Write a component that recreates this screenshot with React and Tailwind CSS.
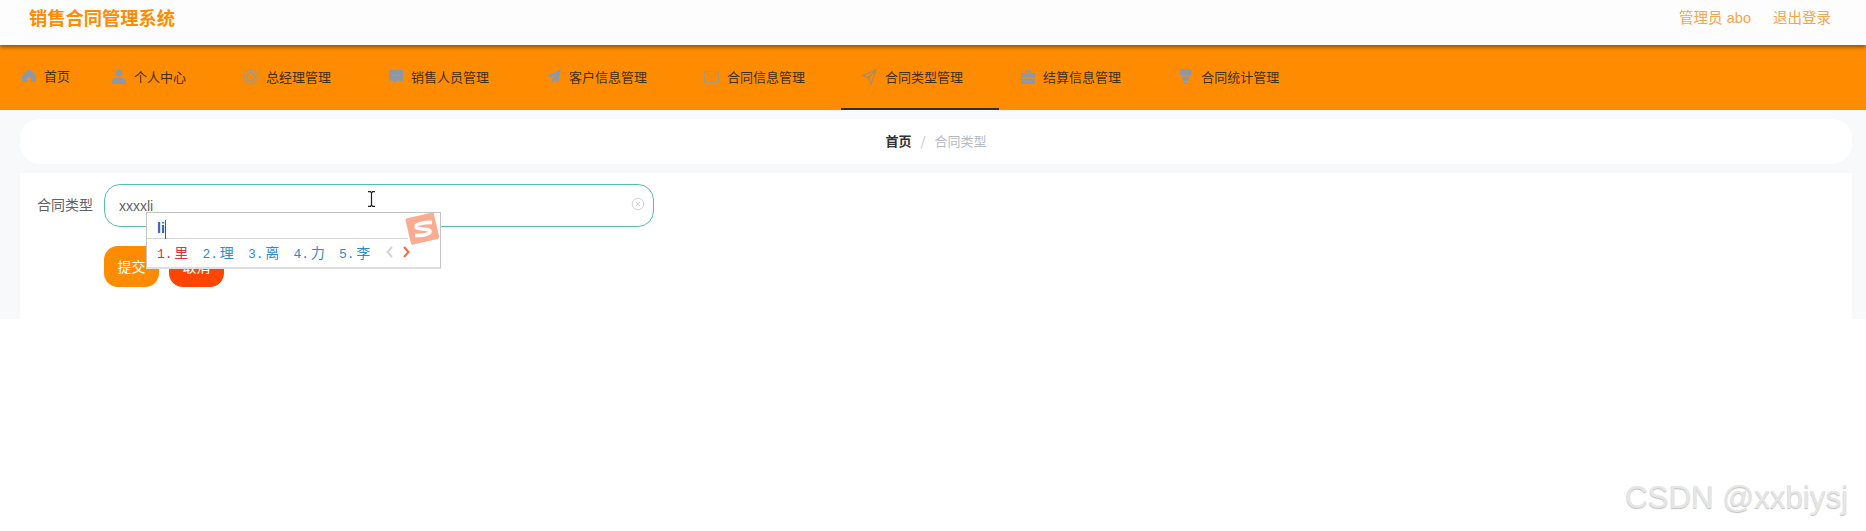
import { ChevronDown, CircleX } from 'lucide-react';

const CJK = '"Noto Sans CJK SC", "Liberation Sans", sans-serif';

function HomeIcon() {
  return (
    <svg width="14" height="13" viewBox="0 0 15 14" className="text-[#8d97a8]">
      <path d="M7.500 0 15 6.600V14H9.600V9.200H5.400V14H0V6.600Z" fill="currentColor" />
    </svg>
  );
}

function UserIcon() {
  return (
    <svg width="14" height="15" viewBox="0 0 15 16" className="text-[#8d97a8]">
      <circle cx="7.500" cy="4" r="3.800" fill="currentColor" />
      <path d="M0 16v-2.600C0 10.600 2.400 9 4.600 9h5.800c2.200 0 4.600 1.600 4.600 4.400V16Z" fill="currentColor" />
    </svg>
  );
}

function HelpIcon() {
  return (
    <svg width="16" height="16" viewBox="0 0 17 17" fill="none" stroke="#a39a82">
      <circle cx="8.500" cy="8.500" r="7.600" strokeWidth="1.300" />
      <circle cx="8.500" cy="8.500" r="4.200" strokeWidth="2" />
    </svg>
  );
}

function CommentIcon() {
  return (
    <svg width="14" height="14" viewBox="0 0 15 15">
      <path d="M0 0h15v11.500H8L5 15v-3.500H0Z" fill="#8d97a8" />
      <circle cx="4.300" cy="6" r=".8" fill="#ff8c00" />
      <circle cx="7.500" cy="6" r=".8" fill="#ff8c00" />
      <circle cx="10.700" cy="6" r=".8" fill="#ff8c00" />
    </svg>
  );
}

function PromotionIcon() {
  return (
    <svg width="14" height="15" viewBox="0 0 15 15">
      <path d="M15 0 0 6.500l3.800 2.300L11 4 5.500 10v5l3-3.500L12 13.500Z" fill="#8d97a8" />
    </svg>
  );
}

function MailIcon() {
  return (
    <svg width="15" height="12" viewBox="0 0 15 12" fill="none" stroke="#a8977a" strokeWidth="1">
      <path d="M.5.500h14v11H.5Z" />
      <path d="M.5.800 7.500 7l7-6.200" />
    </svg>
  );
}

function PositionIcon() {
  return (
    <svg width="15" height="16" viewBox="0 0 15 16" fill="none" stroke="#9c8e72" strokeWidth="1.100">
      <path d="M14 1 1 6.500l5.600 2L9 15Z" />
      <path d="M14 1 6.600 8.500" />
    </svg>
  );
}

function CaseIcon() {
  return (
    <svg width="14" height="14" viewBox="0 0 14 14">
      <path d="M4.500 3V1h5v2" fill="none" stroke="#8d97a8" strokeWidth="1.400" />
      <path d="M0 3h14v4.500H0ZM0 8.700h14V14H0Z" fill="#8d97a8" />
    </svg>
  );
}

function BulbIcon() {
  return (
    <svg width="11" height="15" viewBox="0 0 11 15">
      <path d="M0 0h11v6.500H0ZM1.500 7.500h8L8 12H3ZM3.500 13h4l-1 2h-2Z" fill="#8d97a8" />
    </svg>
  );
}

const MENU = [
  { label: '首页', icon: <HomeIcon />, home: true },
  { label: '个人中心', icon: <UserIcon />, sub: true },
  { label: '总经理管理', icon: <HelpIcon />, sub: true },
  { label: '销售人员管理', icon: <CommentIcon />, sub: true },
  { label: '客户信息管理', icon: <PromotionIcon />, sub: true },
  { label: '合同信息管理', icon: <MailIcon />, sub: true },
  { label: '合同类型管理', icon: <PositionIcon />, sub: true, active: true },
  { label: '结算信息管理', icon: <CaseIcon />, sub: true },
  { label: '合同统计管理', icon: <BulbIcon />, sub: true },
];

function MenuItem({ label, icon, sub, active, home }) {
  return (
    <div
      className={`flex items-center h-[65px] px-5 text-[13px] text-[#40301a] border-b-2 ${active ? 'border-[#303133]' : 'border-transparent'} ${home ? 'pb-[2px]' : ''}`}
    >
      <span className="flex w-[17px] mr-[7px] justify-center">{icon}</span>
      <span>{label}</span>
      {sub && <ChevronDown size={10} strokeWidth={1.200} color="#c29a5c" className="ml-[6px] shrink-0" />}
    </div>
  );
}

function SogouLogo() {
  return (
    <svg width="36" height="34" viewBox="0 0 36 34" className="absolute right-[-1px] top-[-1px]">
      <rect x="3" y="3" width="29" height="27" rx="2" fill="#fbab8f" transform="rotate(-13 18 17)" />
      <path d="M27 10.500C21 10 11 11.500 11 14.500c0 3.500 14 1.500 14 5 0 3-8 4.200-15 4" fill="none" stroke="#fff" strokeWidth="3.600" />
    </svg>
  );
}

function Candidate({ n, text, first }) {
  return (
    <span className={`w-[45.500px] shrink-0 ${first ? 'text-[#d9343f]' : 'text-[#2f8ccc]'}`}>
      <span className="font-['Liberation_Mono',monospace] text-[13px]">{n}.</span>
      <span className="ml-[1.500px] text-[14px]">{text}</span>
    </span>
  );
}

function ImePopup() {
  return (
    <div className="absolute left-[42px] top-[28px] z-10 w-[295px] h-[57px] bg-white border border-[#c4c4c4] border-b-[2px] border-b-[#dedede]">
      <div className="relative h-[26px] w-[261px] border-b border-[#d4d4d4] pl-[10px] pt-[1px]">
        <span className="inline-block h-[19px] border-r border-[#a8322c] leading-[17px] text-[14px] font-semibold text-[#1c62c0] font-['Liberation_Sans',sans-serif]">
          li
        </span>
      </div>
      <div className="flex items-center h-[26px] pl-[10px]">
        {['里', '理', '离', '力', '李'].map((t, i) => (
          <Candidate key={t} n={i + 1} text={t} first={i === 0} />
        ))}
        <svg width="26" height="12" viewBox="0 0 26 12" fill="none" strokeWidth="2" className="ml-[1px]">
          <path d="M6 1 1.500 6 6 11" stroke="#d4d4d4" />
          <path d="M18 1l4.500 5-4.500 5" stroke="#ee6a3c" />
        </svg>
      </div>
      <SogouLogo />
    </div>
  );
}

export default function App() {
  return (
    <div className="relative min-h-[531px] bg-white" style={{ fontFamily: CJK }}>
      <header className="relative z-10 flex items-center justify-between h-[45px] pb-[10px] pl-[29px] pr-[35px] bg-[#fdfdfd] shadow-[0_2px_4px_rgba(60,40,10,0.6)]">
        <div className="text-[18.250px] font-bold text-[#ff8c00]">销售合同管理系统</div>
        <div className="flex gap-[22px] text-[14.500px] text-[#f4a64e]">
          <span>
            管理员 <span className="ml-[1px] font-['Liberation_Sans',sans-serif]">abo</span>
          </span>
          <span>退出登录</span>
        </div>
      </header>

      <nav className="flex h-[65px] bg-[#ff8c00]">
        {MENU.map((m) => (
          <MenuItem key={m.label} {...m} />
        ))}
      </nav>

      <main className="h-[209px] bg-[#f7f9fb] pt-[9px] pl-[20px] pr-[14px]">
        <div className="flex items-center justify-center h-[45px] pb-[2px] rounded-[20px] bg-white text-[13px]">
          <span className="font-bold text-[#303133]">首页</span>
          <span className="mx-[9px] text-[#c0c4cc]">/</span>
          <span className="text-[#b4bac4]">合同类型</span>
        </div>

        <div className="mt-[9px] h-[146px] bg-white pt-[11px]">
          <div className="flex items-center">
            <label className="w-[73px] mr-[11px] pb-[2px] text-right text-[14px] text-[#606266]">合同类型</label>
            <div className="relative w-[550px] h-[43px]">
              <input
                readOnly
                value="xxxxli"
                className="w-full h-full pl-[14px] pr-[30px] rounded-[16px] border border-[#54c0a6] bg-white text-[14px] text-[#606266] outline-none font-['Liberation_Sans',sans-serif]"
              />
              <CircleX size={14} strokeWidth={1.300} color="#c0c4cc" className="absolute right-[9px] top-[13px]" />
              <ImePopup />
            </div>
          </div>
          <div className="flex gap-[10px] ml-[84px] mt-[19px]">
            <button className="w-[55px] h-[41px] rounded-[14px] bg-[#ff8c00] text-[14px] text-white">提交</button>
            <button className="w-[55px] h-[41px] rounded-[14px] bg-[#ff4500] text-[14px] text-white">取消</button>
          </div>
        </div>
      </main>

      {/* mouse cursor over the input */}
      <svg width="9" height="16" viewBox="0 0 9 16" fill="none" stroke="#222" strokeWidth="1.200" className="absolute left-[367px] top-[191px] z-20">
        <path d="M1 .7h2.500L4.500 2l1-1.300H8M4.500 2v12M1 15.300h2.500L4.500 14l1 1.300H8" />
      </svg>

      <div className="absolute left-[1625px] top-[480px] text-[31.300px] leading-[36px] text-[#e6e6e6] font-['Liberation_Sans',sans-serif] [text-shadow:0_1px_1px_rgba(0,0,0,0.25)]">
        CSDN @xxbiysj
      </div>
    </div>
  );
}
